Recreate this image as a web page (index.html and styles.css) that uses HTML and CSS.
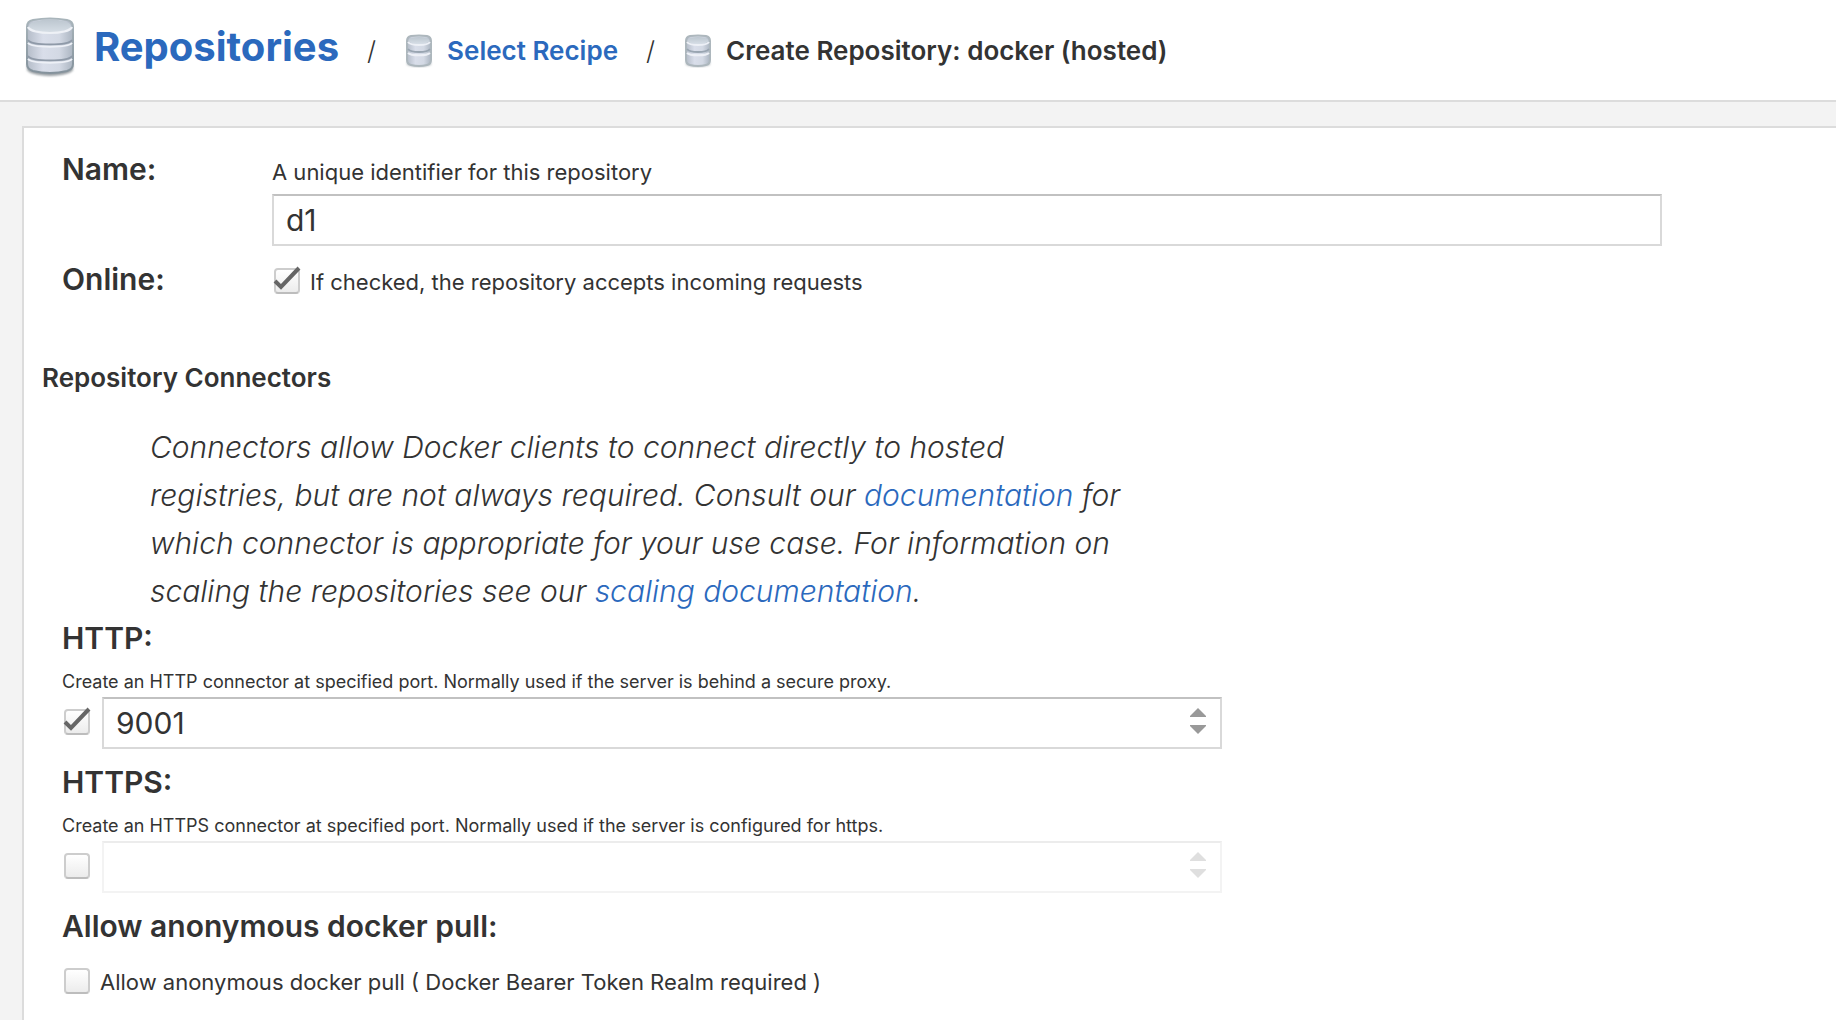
FILE: index.html
```html
<!DOCTYPE html>
<html lang="en">
<head>
  <meta charset="utf-8">
  <meta name="viewport" content="width=device-width, initial-scale=1">
  <title>Create Repository: docker (hosted)</title>
  <link rel="stylesheet" href="styles.css">
</head>
<body>
  <header class="header">
    <nav aria-label="Breadcrumb">
      <ol class="crumbs">
        <li class="crumb crumb-main">
          <svg class="icon-large" viewBox="0 0 54 62" aria-hidden="true">
            <defs>
              <linearGradient id="side" x1="0" x2="1" y1="0" y2="0">
                <stop offset="0" stop-color="#b4bcc8"/>
                <stop offset=".35" stop-color="#d9deea"/>
                <stop offset=".7" stop-color="#d3d9e4"/>
                <stop offset="1" stop-color="#abb5c1"/>
              </linearGradient>
              <linearGradient id="lid" x1="0" x2="0" y1="0" y2="1">
                <stop offset="0" stop-color="#bcc6cf"/>
                <stop offset="1" stop-color="#d6dee6"/>
              </linearGradient>
              <linearGradient id="rim" x1="0" x2="0" y1="0" y2="1">
                <stop offset="0" stop-color="#a9b5bb"/>
                <stop offset="1" stop-color="#84929c"/>
              </linearGradient>
              <filter id="soft" x="-20%" y="-50%" width="140%" height="200%">
                <feGaussianBlur stdDeviation="1.3"/>
              </filter>
            </defs>
            <path d="M4 48 H50 V54 Q47 59 27 60 Q7 59 4 54Z" fill="#7e868c" opacity=".8" filter="url(#soft)"/>
            <path d="M4 11 Q4 5 10 4 Q27 1 44 4 Q50 5 50 11 V48 Q50 53 44 55 Q27 59 10 55 Q4 53 4 48Z" fill="url(#side)" stroke="url(#rim)" stroke-width="2"/>
            <ellipse cx="27" cy="10" rx="21" ry="6.500" fill="url(#lid)"/>
            <g fill="none">
              <path d="M5 11 C8 19 46 19 49 11" stroke="#eef1f6" stroke-width="2.200"/>
              <path d="M5 24 C9 30 45 30 49 24 M5 40 C9 46 45 46 49 40" stroke="#8f9aa8" stroke-width="1.800"/>
              <path d="M5 27 C9 32 45 32 49 27 M5 43 C9 48 45 48 49 43" stroke="#eef1f7" stroke-width="2"/>
            </g>
          </svg>
          <a class="crumb-title" href="#repositories">Repositories</a>
        </li>
        <li class="slash" aria-hidden="true">/</li>
        <li class="crumb">
          <svg class="icon-small" viewBox="0 0 30 34" aria-hidden="true">
            <path d="M3 27 V31 Q15 35 27 31 V27Z" fill="#a8afb5" opacity=".8" filter="url(#soft)"/>
            <path d="M3 7 Q3 3 7 2 Q15 1 23 2 Q27 3 27 7 V26 Q27 30 23 31 Q15 33 7 31 Q3 30 3 26Z" fill="url(#side)" stroke="#adb7bd" stroke-width="2"/>
            <ellipse cx="15" cy="6.500" rx="10.500" ry="3.500" fill="url(#lid)"/>
            <path d="M4 8 C7 12 23 12 26 8 M4 19 C7 22 23 22 26 19" fill="none" stroke="#edf0f6" stroke-width="2"/>
            <path d="M4 15 C7 19 23 19 26 15" fill="none" stroke="#99a5b1" stroke-width="1.800"/>
          </svg>
          <a href="#recipe">Select Recipe</a>
        </li>
        <li class="slash" aria-hidden="true">/</li>
        <li class="crumb" aria-current="page">
          <svg class="icon-small" viewBox="0 0 30 34" aria-hidden="true">
            <path d="M3 27 V31 Q15 35 27 31 V27Z" fill="#a8afb5" opacity=".8" filter="url(#soft)"/>
            <path d="M3 7 Q3 3 7 2 Q15 1 23 2 Q27 3 27 7 V26 Q27 30 23 31 Q15 33 7 31 Q3 30 3 26Z" fill="url(#side)" stroke="#adb7bd" stroke-width="2"/>
            <ellipse cx="15" cy="6.500" rx="10.500" ry="3.500" fill="url(#lid)"/>
            <path d="M4 8 C7 12 23 12 26 8 M4 19 C7 22 23 22 26 19" fill="none" stroke="#edf0f6" stroke-width="2"/>
            <path d="M4 15 C7 19 23 19 26 15" fill="none" stroke="#99a5b1" stroke-width="1.800"/>
          </svg>
          <span>Create Repository: docker (hosted)</span>
        </li>
      </ol>
    </nav>
  </header>

  <main class="panel">
    <form>
      <div class="row">
        <label class="label" for="name">Name:</label>
        <div class="field">
          <p class="hint" id="name-hint">A unique identifier for this repository</p>
          <input class="text" id="name" type="text" value="d1" aria-describedby="name-hint">
        </div>
      </div>
      <div class="row">
        <span class="label">Online:</span>
        <div class="check-line">
          <span class="tick">
            <input type="checkbox" id="online" checked>
            <svg viewBox="0 0 28 28" aria-hidden="true"><path d="M3 14 L9 20 L27 1"/></svg>
          </span>
          <label class="hint" for="online">If checked, the repository accepts incoming requests</label>
        </div>
      </div>

      <section class="connectors">
        <h2 class="section-title">Repository Connectors</h2>
        <p class="about">Connectors allow Docker clients to connect directly to hosted registries, but are not always required. Consult our <a href="#documentation">documentation</a> for which connector is appropriate for your use case. For information on scaling the repositories see our <a href="#scaling">scaling documentation</a>.</p>

        <div class="group">
          <label class="label" for="http-port">HTTP:</label>
          <p class="note" id="http-note">Create an HTTP connector at specified port. Normally used if the server is behind a secure proxy.</p>
          <div class="port-line">
            <span class="tick">
              <input type="checkbox" id="http-on" aria-label="Enable HTTP connector" checked>
              <svg viewBox="0 0 28 28" aria-hidden="true"><path d="M3 14 L9 20 L27 1"/></svg>
            </span>
            <div class="port">
              <input class="text" id="http-port" type="number" value="9001" aria-describedby="http-note">
              <div class="spinner">
                <button class="step" type="button" aria-label="Increase HTTP port"><svg viewBox="0 0 16 9" aria-hidden="true"><path d="M8 0 L16 8 V9 H0 V8Z"/></svg></button>
                <button class="step" type="button" aria-label="Decrease HTTP port"><svg viewBox="0 0 16 9" aria-hidden="true"><path d="M0 0 H16 V1 L8 9 L0 1Z"/></svg></button>
              </div>
            </div>
          </div>
        </div>

        <div class="group">
          <label class="label" for="https-port">HTTPS:</label>
          <p class="note" id="https-note">Create an HTTPS connector at specified port. Normally used if the server is configured for https.</p>
          <div class="port-line">
            <span class="tick">
              <input type="checkbox" id="https-on" aria-label="Enable HTTPS connector">
              <svg viewBox="0 0 28 28" aria-hidden="true"><path d="M3 14 L9 20 L27 1"/></svg>
            </span>
            <div class="port port-off">
              <input class="text" id="https-port" type="number" aria-describedby="https-note" disabled>
              <div class="spinner">
                <button class="step" type="button" aria-label="Increase HTTPS port" disabled><svg viewBox="0 0 16 9" aria-hidden="true"><path d="M8 0 L16 8 V9 H0 V8Z"/></svg></button>
                <button class="step" type="button" aria-label="Decrease HTTPS port" disabled><svg viewBox="0 0 16 9" aria-hidden="true"><path d="M0 0 H16 V1 L8 9 L0 1Z"/></svg></button>
              </div>
            </div>
          </div>
        </div>

        <div class="group">
          <span class="label">Allow anonymous docker pull:</span>
          <div class="check-line">
            <span class="tick">
              <input type="checkbox" id="anonymous">
              <svg viewBox="0 0 28 28" aria-hidden="true"><path d="M3 14 L9 20 L27 1"/></svg>
            </span>
            <label class="hint" for="anonymous">Allow anonymous docker pull ( Docker Bearer Token Realm required )</label>
          </div>
        </div>
      </section>
    </form>
  </main>
</body>
</html>
```
FILE: styles.css
```css
* {
  box-sizing: border-box;
}

body {
  display: flex;
  flex-direction: column;
  min-height: 100vh;
  margin: 0;
  background: #f3f3f3;
  color: #333;
  font-family: Inter, "Open Sans", sans-serif;
  font-size: 22px;
  line-height: 30px;
}

p,
h2 {
  margin: 0;
}

a {
  color: #2b69bd;
  text-decoration: none;
}

/* Breadcrumb header */

.header {
  padding: 16px 23px 22px;
  border-bottom: 2px solid #dcdcdc;
  background: #fff;
}

.crumbs {
  display: flex;
  align-items: center;
  margin: 0;
  padding: 0;
  list-style: none;
}

.crumb {
  display: flex;
  align-items: center;
  gap: 13px;
  font-size: 26px;
  font-weight: 600;
  line-height: 36px;
}

.crumb-main {
  gap: 17px;
}

.crumb-title {
  font-size: 40px;
  font-weight: 700;
  line-height: 48px;
}

.icon-large {
  flex: none;
  width: 54px;
  height: 62px;
}

.icon-small {
  flex: none;
  width: 30px;
  height: 34px;
}

.crumb + .slash,
.slash + .crumb {
  margin-top: 7px;
}

.slash {
  padding: 0 28px;
  font-size: 26px;
  font-weight: 300;
}

/* Form panel, running off the right edge of the window */

.panel {
  flex: 1;
  margin: 24px 0 0 22px;
  padding: 21px 0 16px 38px;
  border: solid #dcdcdc;
  border-width: 2px 0 0 2px;
  background: #fff;
}

.row {
  display: grid;
  grid-template-columns: 210px 1fr;
  align-items: baseline;
  padding-right: 174px;
}

.row + .row {
  margin-top: 13px;
}

.label {
  display: block;
  font-size: 30px;
  font-weight: 600;
  line-height: 40px;
}

.field .hint {
  margin-bottom: 7px;
}

.text {
  display: block;
  width: 100%;
  height: 52px;
  padding: 0 12px;
  border: 2px solid #d9d9d9;
  border-top-color: #c1c1c1;
  border-radius: 0;
  outline: 0;
  background: #fff;
  color: #333;
  font: inherit;
  font-size: 30px;
  appearance: textfield;
}

.text::-webkit-inner-spin-button {
  display: none;
}

.check-line,
.port-line {
  display: flex;
}

.check-line {
  align-items: baseline;
  gap: 10px;
}

.port-line {
  align-items: center;
  gap: 12px;
}

/* Tick box with an oversized check mark */

.tick {
  position: relative;
  flex: none;
  align-self: center;
  width: 28px;
  height: 28px;
  margin-bottom: 2px;
}

.tick input {
  display: block;
  width: 26px;
  height: 26px;
  margin: 1px 0 1px 2px;
  border: 2px solid #cdcdcd;
  border-bottom-color: #bdbdbd;
  border-radius: 4px;
  background: linear-gradient(#fff, #ececec);
  appearance: none;
}

.tick svg {
  position: absolute;
  inset: 0;
  display: none;
  width: 28px;
  height: 28px;
  overflow: visible;
  fill: none;
  stroke: #666;
  stroke-width: 4;
  pointer-events: none;
}

.tick input:checked + svg {
  display: block;
}

/* Connectors */

.connectors {
  margin-top: 61px;
}

.section-title {
  margin-left: -20px;
  font-size: 26px;
  font-weight: 600;
  line-height: 36px;
}

.about {
  max-width: 984px;
  margin: 27px 0 3px;
  padding-left: 88px;
  box-sizing: content-box;
  font-size: 30px;
  font-style: italic;
  font-weight: 330;
  line-height: 48px;
}

.group {
  max-width: 1160px;
}

.group + .group {
  margin-top: 13px;
}

.note {
  margin: 12px 0 3px;
  font-size: 18px;
  line-height: 24px;
}

.group .check-line {
  margin-top: 21px;
}

.port {
  position: relative;
  flex: 1;
}

.port-off {
  opacity: .3;
}

.spinner {
  position: absolute;
  top: 7px;
  right: 12px;
  display: grid;
}

.step {
  display: grid;
  place-items: center;
  width: 24px;
  height: 17px;
  padding: 0;
  border: 0;
  background: none;
}

.step svg {
  width: 16px;
  height: 9px;
  fill: #999;
}
```
